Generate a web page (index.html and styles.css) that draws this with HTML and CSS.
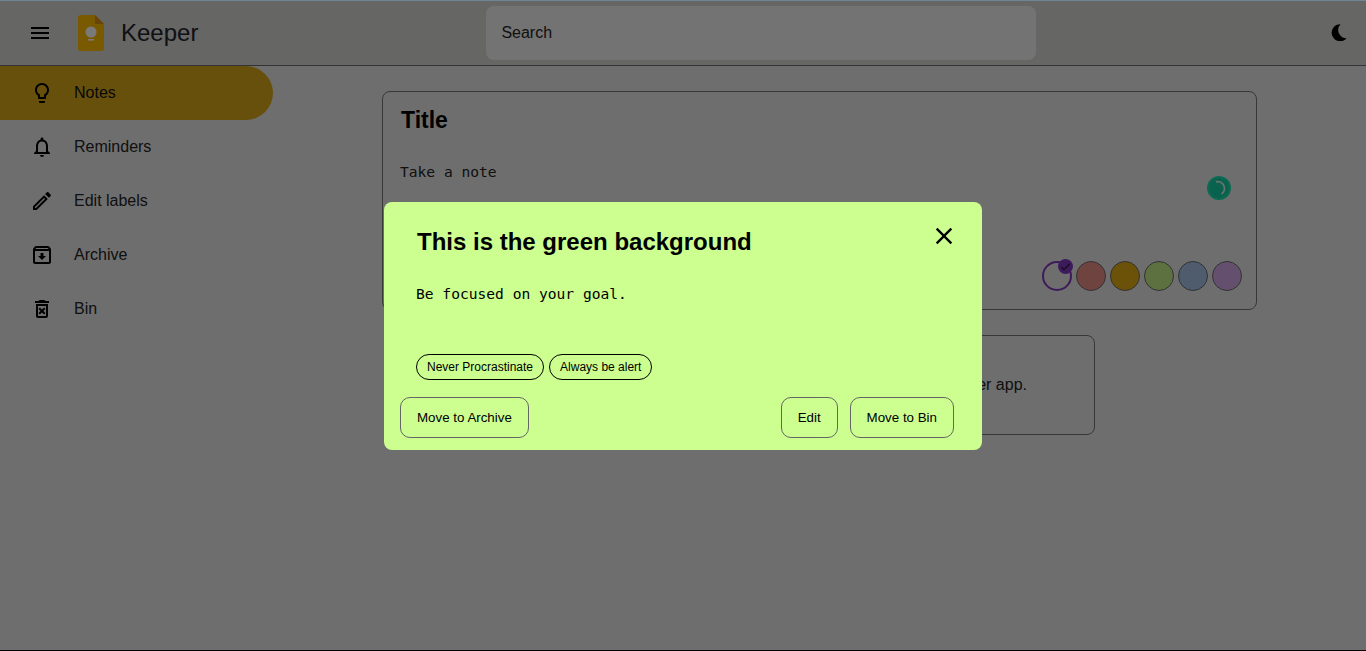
FILE: index.html
```html
<!DOCTYPE html>
<html lang="en">
<head>
<meta charset="utf-8">
<title>Keeper</title>
<link rel="stylesheet" href="styles.css">
</head>
<body>
<div class="page">
  <header class="topbar">
    <div class="brand">
      <svg class="icon menu-icon" viewBox="0 0 24 24"><path d="M3 18h18v-2H3v2zm0-5h18v-2H3v2zm0-7v2h18V6H3z"/></svg>
      <svg class="logo" viewBox="0 0 26 36"><path class="logo-body" d="M2.500 0H17l9 9v24.500a2.500 2.500 0 0 1-2.500 2.500h-21A2.500 2.500 0 0 1 0 33.500v-31A2.500 2.500 0 0 1 2.500 0z"/><path class="logo-fold" d="M17 0l9 9h-9z"/><circle class="logo-bulb" cx="13" cy="17" r="5.500"/><rect class="logo-bulb" x="10" y="24" width="6" height="1.600"/></svg>
      <span class="brand-name">Keeper</span>
    </div>
    <div class="search">Search</div>
    <svg class="moon" viewBox="0 0 16 17"><path d="M9.500 .2A8.500 8.500 0 1 0 15.600 14.200A8.300 8.300 0 0 1 9.500 .2z"/></svg>
  </header>
  <div class="body-row">
    <nav class="sidebar">
      <a class="nav-item active"><svg class="icon" viewBox="0 0 24 24"><path d="M9 21c0 .55.45 1 1 1h4c.55 0 1-.45 1-1v-1H9v1zm3-19C8.140 2 5 5.140 5 9c0 2.380 1.190 4.470 3 5.740V17c0 .55.45 1 1 1h6c.55 0 1-.45 1-1v-2.260c1.810-1.270 3-3.360 3-5.740 0-3.860-3.140-7-7-7zm2.850 11.100l-.85.6V16h-4v-2.300l-.85-.6C7.800 12.160 7 10.630 7 9c0-2.760 2.240-5 5-5s5 2.240 5 5c0 1.630-.8 3.160-2.150 4.100z"/></svg>Notes</a>
      <a class="nav-item"><svg class="icon" viewBox="0 0 24 24"><path d="M12 22c1.100 0 2-.9 2-2h-4c0 1.100.9 2 2 2zm6-6v-5c0-3.070-1.630-5.640-4.500-6.320V4c0-.83-.67-1.500-1.500-1.500s-1.500.67-1.500 1.500v.68C7.640 5.360 6 7.920 6 11v5l-2 2v1h16v-1l-2-2zm-2 1H8v-6c0-2.480 1.510-4.500 4-4.500s4 2.020 4 4.500v6z"/></svg>Reminders</a>
      <a class="nav-item"><svg class="icon" viewBox="0 0 24 24"><path d="M3 17.250V21h3.750L17.810 9.940l-3.750-3.750L3 17.250zM5.920 19H5v-.92l9.060-9.060.92.92L5.920 19zM20.710 5.630l-2.340-2.340c-.2-.2-.45-.29-.71-.29s-.51.1-.7.29l-1.830 1.830 3.750 3.750 1.830-1.830c.39-.39.39-1.020 0-1.410z"/></svg>Edit labels</a>
      <a class="nav-item"><svg class="icon" viewBox="0 0 24 24"><path d="M20.540 5.230l-1.390-1.680C18.880 3.210 18.470 3 18 3H6c-.47 0-.88.21-1.160.55L3.460 5.230C3.170 5.570 3 6.020 3 6.500V19c0 1.100.9 2 2 2h14c1.100 0 2-.9 2-2V6.500c0-.48-.17-.93-.46-1.270zM6.240 5h11.520l.81.97H5.440l.8-.97zM5 19V8h14v11H5zm8.450-9h-2.900v3H8l4 4 4-4h-2.550z"/></svg>Archive</a>
      <a class="nav-item"><svg class="icon" viewBox="0 0 24 24"><path d="M14.120 10.470L12 12.590l-2.130-2.120-1.410 1.410L10.590 14l-2.120 2.120 1.410 1.410L12 15.410l2.120 2.120 1.410-1.410L13.410 14l2.120-2.120zM15.500 4l-1-1h-5l-1 1H5v2h14V4zM6 19c0 1.100.9 2 2 2h8c1.100 0 2-.9 2-2V7H6v12zM8 9h8v10H8V9z"/></svg>Bin</a>
    </nav>
    <main class="content">
      <section class="composer">
        <div class="composer-title">Title</div>
        <div class="composer-text">Take a note</div>
        <div class="composer-spin">
          <svg class="grammar" viewBox="0 0 24 24"><circle class="grammar-bg" cx="12" cy="12" r="12"/><circle class="grammar-in" cx="12" cy="12" r="10"/><path class="grammar-arc" d="M9 5.800A6.800 6.800 0 0 1 14.500 18"/></svg>
        </div>
        <div class="swatches">
          <span class="swatch plain"><span class="tick"><svg viewBox="0 0 14 14"><path d="M3 7.500l2.500 2.500 5.500-5.500"/></svg></span></span>
          <span class="swatch red"></span>
          <span class="swatch yellow"></span>
          <span class="swatch green"></span>
          <span class="swatch blue"></span>
          <span class="swatch purple"></span>
        </div>
      </section>
      <div class="notes">
        <article class="note">Welcome to the Keeper app.</article>
      </div>
    </main>
  </div>
  <div class="backdrop">
    <div class="modal">
      <div class="modal-head">
        <h2 class="modal-title">This is the green background</h2>
        <svg class="icon close" viewBox="0 0 24 24"><path d="M19 6.410L17.590 5 12 10.590 6.410 5 5 6.410 10.590 12 5 17.590 6.410 19 12 13.410 17.590 19 19 17.590 13.410 12z"/></svg>
      </div>
      <p class="modal-text">Be focused on your goal.</p>
      <div class="chips">
        <span class="chip">Never Procrastinate</span>
        <span class="chip">Always be alert</span>
      </div>
      <div class="actions">
        <button class="btn">Move to Archive</button>
        <span class="spacer"></span>
        <button class="btn">Edit</button>
        <button class="btn">Move to Bin</button>
      </div>
    </div>
  </div>
</div>
</body>
</html>
```
FILE: styles.css
```css
* { box-sizing: border-box; }
html, body { margin: 0; height: 100%; }
body { font-family: "Liberation Sans", Arial, sans-serif; color: #222; background: #dcdcdc; overflow: hidden; }
.page { position: relative; height: 651px; border-top: 1px solid #6f8496; border-bottom: 1px solid #000; display: flex; flex-direction: column; }
.icon { width: 24px; height: 24px; fill: #000; flex: none; }

.topbar { height: 65px; flex: none; display: flex; align-items: center; background: #cdcdca; border-bottom: 1px solid #666; position: relative; padding: 0 19px 0 28px; }
.brand { display: flex; align-items: center; }
.logo { width: 26px; height: 36px; margin-left: 26px; }
.logo-body { fill: #f4b400; }
.logo-fold { fill: #d08a10; }
.logo-bulb { fill: #f4f4f4; }
.brand-name { font-size: 24px; margin-left: 17px; color: #20202a; }
.search { width: 550px; height: 54px; margin-left: 288px; padding-left: 15px; display: flex; align-items: center; background: #e6e6e6; border-radius: 8px; font-size: 16px; color: #222; }
.moon { width: 16px; height: 17px; margin: -2px 0 0 auto; fill: #000; }

.body-row { flex: 1; display: flex; min-height: 0; }
.sidebar { width: 273px; flex: none; }
.nav-item { height: 54px; display: flex; align-items: center; gap: 20px; padding-left: 30px; font-size: 16px; color: #222; }
.nav-item.active { background: #cca018; border-radius: 0 27px 27px 0; color: #111; }

.content { flex: 1; display: flex; flex-direction: column; align-items: center; padding-top: 25px; }
.composer { width: 875px; height: 219px; border: 1px solid #707070; border-radius: 8px; padding: 14px 18px 0; position: relative; }
.composer-title { font-size: 23px; font-weight: 700; color: #000; line-height: 28px; }
.composer-text { font-family: "DejaVu Sans Mono", monospace; font-size: 14.600px; line-height: 18px; margin: 29px 0 0 -1px; color: #222; }
.composer-spin { position: absolute; top: 84px; right: 25px; line-height: 0; }
.grammar { width: 24px; height: 24px; }
.grammar-bg { fill: #18d4a6; }
.grammar-in { fill: #15c39a; }
.grammar-arc { fill: none; stroke: #c8e8dc; stroke-width: 1.800; }
.swatches { position: absolute; right: 14px; bottom: 18px; display: flex; gap: 4px; }
.swatch { width: 30px; height: 30px; border-radius: 50%; border: 1px solid #666; position: relative; }
.swatch.plain { border: 2px solid #7a35b4; }
.swatch.red { background: #dc8680; }
.swatch.yellow { background: #d6a410; }
.swatch.green { background: #b8e080; }
.swatch.blue { background: #9eb8dc; }
.swatch.purple { background: #c8a0dc; }
.tick { position: absolute; top: -4px; right: -3px; width: 15px; height: 15px; border-radius: 50%; background: #7a35b4; }
.tick svg { display: block; width: 15px; height: 15px; fill: none; stroke: #2a1a40; stroke-width: 1.200; }

.notes { width: 875px; display: flex; justify-content: flex-end; padding-right: 162px; margin-top: 25px; }
.note { width: 360px; height: 100px; border: 1px solid #707070; border-radius: 8px; padding: 40px 67px 0 0; text-align: right; font-size: 16px; color: #222; }

.backdrop { position: absolute; inset: 0; background: rgba(0, 0, 0, .5); display: flex; align-items: center; justify-content: center; }
.modal { width: 598px; height: 248px; background: #ccff90; border-radius: 8px; padding: 0 28px 12px 16px; display: flex; flex-direction: column; color: #000; }
.modal-head { display: flex; align-items: flex-start; justify-content: space-between; padding: 26px 0 0 17px; height: 66px; }
.modal-title { margin: 0; font-size: 24px; font-weight: 700; line-height: 28px; }
.close { width: 28px; height: 28px; margin: -6px -4px 0 0; }
.modal-text { margin: 17px 0 0 16px; font-family: "DejaVu Sans Mono", monospace; font-size: 14.600px; line-height: 18px; }
.chips { display: flex; gap: 5px; margin: 51px 0 0 16px; }
.chip { height: 26px; display: flex; align-items: center; padding: 0 10px; border: 1.500px solid #000; border-radius: 13px; font-size: 12px; }
.actions { display: flex; gap: 12px; margin-top: 17px; }
.spacer { flex: 1; }
.btn { height: 41px; padding: 0 16px; background: transparent; border: 1px solid #666; border-radius: 10px; font: 13.333px "Liberation Sans", Arial, sans-serif; color: #000; }
```
